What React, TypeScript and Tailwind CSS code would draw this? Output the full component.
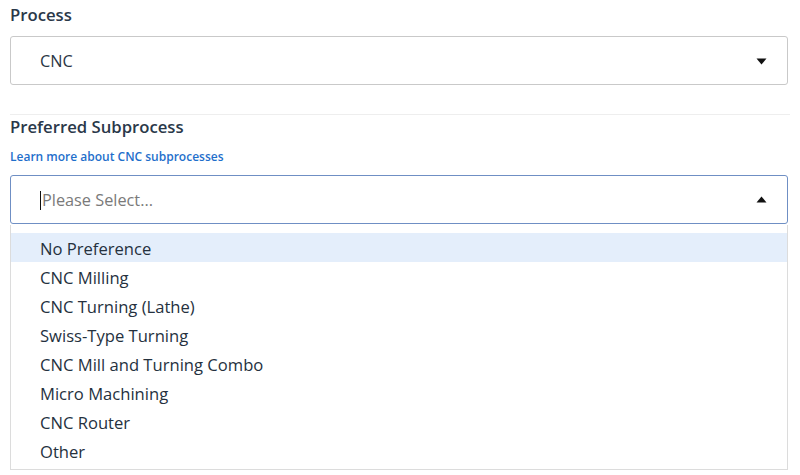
import { useState } from "react";

const OPTIONS = [
  "No Preference",
  "CNC Milling",
  "CNC Turning (Lathe)",
  "Swiss-Type Turning",
  "CNC Mill and Turning Combo",
  "Micro Machining",
  "CNC Router",
  "Other",
];

function Caret({ up }: { up?: boolean }) {
  return (
    <svg width="11" height="7" viewBox="0 0 11 7" className="shrink-0" aria-hidden="true">
      {up ? <path d="M5.5 0.5 L10.5 6.5 L0.5 6.5 Z" fill="#111" /> : <path d="M0.5 0.5 L10.5 0.5 L5.5 6.5 Z" fill="#111" />}
    </svg>
  );
}

export default function App() {
  const [hovered, setHovered] = useState(0);

  return (
    <div className="min-h-[475px] w-[800px] bg-white font-['Open_Sans',sans-serif] text-[#22303f]">
      <div className="flex flex-col px-[10px] pt-[3px]">
        <label className="text-[16.7px] leading-6 font-semibold text-[#2a3849]">Process</label>

        <button
          type="button"
          className="mt-[9px] flex h-[49px] w-[778px] items-center justify-between rounded-[3px] border border-[#c9c9c9] bg-white pl-[29px] pr-[20px] pt-px text-left"
        >
          <span className="text-[16.3px] leading-6 text-[#2a3644]">CNC</span>
          <Caret />
        </button>

        <div className="mt-[29px] h-px w-[780px] bg-[#eeeeee]" />

        <label className="text-[16.7px] leading-6 font-semibold text-[#2a3849]">Preferred Subprocess</label>
        <a href="#" className="mt-[10px] text-xs leading-4 font-semibold text-[#1f6fcb]">
          Learn more about CNC subprocesses
        </a>

        <div className="mt-[10px] w-[778px]">
          <div className="flex h-[49px] items-center justify-between rounded-[3px] border border-[#6f8fc4] bg-white pl-[29px] pr-[20px]">
            <div className="flex items-center pt-px">
              <span className="h-[19px] w-px bg-[#111]" />
              <span className="ml-px text-[16.3px] leading-6 text-[#7a7a7a]">Please Select...</span>
            </div>
            <Caret up />
          </div>

          <ul className="mt-px border-x border-b border-[#dcdcdc] bg-white pt-[8px] pb-[4px]">
            {OPTIONS.map((opt, i) => (
              <li
                key={opt}
                onMouseEnter={() => setHovered(i)}
                className={
                  "flex h-[29px] items-center pl-[29px] pt-[2px] text-[16.6px] leading-6 text-[#25313e] " +
                  (hovered === i ? "bg-[#e4eefb]" : "bg-white")
                }
              >
                {opt}
              </li>
            ))}
          </ul>
        </div>
      </div>
    </div>
  );
}
